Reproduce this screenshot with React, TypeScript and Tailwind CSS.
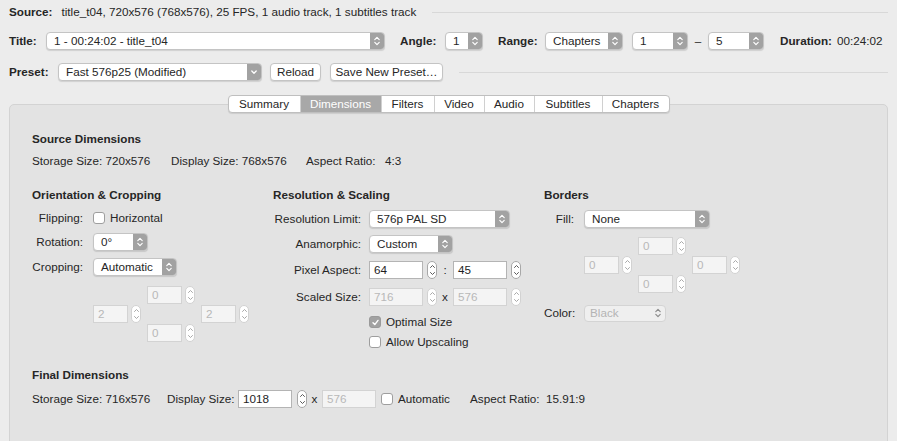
import React from "react";

const UpDown = ({ color = "#ffffff" }: { color?: string }) => (
  <svg width="8" height="12" viewBox="0 0 8 12" fill="none">
    <path d="M1.8 4.6 L4 2.4 L6.2 4.6 M1.8 7.4 L4 9.6 L6.2 7.4" stroke={color} strokeWidth="1.2" strokeLinecap="round" strokeLinejoin="round" />
  </svg>
);

const Down = () => (
  <svg width="8" height="12" viewBox="0 0 8 12" fill="none">
    <path d="M1.8 5 L4 7.2 L6.2 5" stroke="#ffffff" strokeWidth="1.3" strokeLinecap="round" strokeLinejoin="round" />
  </svg>
);

const Popup = ({ width, label, down }: { width: string; label: string; down?: boolean }) => (
  <div className={`${width} flex h-[18px] shrink-0 items-stretch rounded-[4px] border border-[#c4c4c4] bg-white shadow-[0_1px_1px_rgba(0,0,0,0.12)]`}>
    <span className="flex flex-1 items-center overflow-hidden whitespace-nowrap pl-[7px] text-[#262626]">{label}</span>
    <span className="flex w-[14px] items-center justify-center rounded-r-[3px] bg-[#a2a2a2]">
      {down ? <Down /> : <UpDown />}
    </span>
  </div>
);

const DisabledPopup = ({ width, label }: { width: string; label: string }) => (
  <div className={`${width} flex h-[17px] shrink-0 items-center rounded-[4px] border border-[#d4d4d4] bg-[#efefef]`}>
    <span className="flex-1 pl-[5px] text-[#b4b4b4]">{label}</span>
    <span className="flex w-[14px] items-center justify-center">
      <UpDown color="#8c8c8c" />
    </span>
  </div>
);

const Stepper = ({ dark }: { dark?: boolean }) => (
  <span className={`flex h-[18px] w-[10px] items-center justify-center rounded-full border bg-white ${dark ? "border-[#a8a8a8]" : "border-[#d2d2d2]"}`}>
    <svg width="7" height="16" viewBox="0 0 7 16" fill="none">
      <path d="M1.5 5.5 L3.5 3.5 L5.5 5.5 M1.5 10.5 L3.5 12.5 L5.5 10.5" stroke={dark ? "#5a5a5a" : "#a8a8a8"} strokeWidth="1" strokeLinecap="round" strokeLinejoin="round" />
    </svg>
  </span>
);

const Field = ({ width, value, disabled }: { width: string; value: string; disabled?: boolean }) => (
  <span className={`${width} flex h-[18px] shrink-0 items-center border pl-[4px] ${disabled ? "border-[#d3d3d3] bg-[#f4f4f4] text-[#b8b8b8]" : "border-[#b4b4b4] bg-white text-[#1e1e1e]"}`}>
    {value}
  </span>
);

const Checkbox = ({ checked }: { checked?: boolean }) => (
  <span className={`flex h-[12px] w-[12px] shrink-0 items-center justify-center rounded-[3px] border ${checked ? "border-[#9a9a9a] bg-[#a2a2a2]" : "border-[#9e9e9e] bg-white"}`}>
    {checked && (
      <svg width="9" height="9" viewBox="0 0 9 9" fill="none">
        <path d="M2 4.8 L3.8 6.6 L7 2.4" stroke="#ffffff" strokeWidth="1.4" strokeLinecap="round" strokeLinejoin="round" />
      </svg>
    )}
  </span>
);

// small number box with stepper, used in the crop and border grids
const SmallNum = ({ value }: { value: string }) => (
  <div className="flex items-center gap-[3px]">
    <Field width="w-[35px]" value={value} disabled />
    <Stepper />
  </div>
);

const CrossGrid = ({ top, left, right, bottom }: { top: string; left: string; right: string; bottom: string }) => (
  <div className="grid grid-cols-[54px_54px_54px] grid-rows-[18px_18px_18px] gap-y-[1px]">
    <div />
    <SmallNum value={top} />
    <div />
    <SmallNum value={left} />
    <div />
    <SmallNum value={right} />
    <div />
    <SmallNum value={bottom} />
    <div />
  </div>
);

const tabs = ["Summary", "Dimensions", "Filters", "Video", "Audio", "Subtitles", "Chapters"];
const tabWidths: Record<string, string> = {
  Summary: "w-[71px]",
  Dimensions: "w-[81px]",
  Filters: "w-[53px]",
  Video: "w-[50px]",
  Audio: "w-[50px]",
  Subtitles: "w-[68px]",
  Chapters: "w-[67px]",
};

const App = () => {
  return (
    <div className="flex h-[441px] w-[897px] flex-col overflow-hidden whitespace-nowrap bg-[#ececec] font-['Liberation_Sans',Arial,sans-serif] text-[11.7px] text-[#262626]">
      {/* Source */}
      <div className="flex h-[24px] items-center pl-[9px] pr-[9px]">
        <span className="font-bold">Source:</span>
        <span className="ml-[9px]">title_t04, 720x576 (768x576), 25 FPS, 1 audio track, 1 subtitles track</span>
        <span className="ml-[16px] h-px flex-1 bg-[#d8d8d8]" />
      </div>

      {/* Title */}
      <div className="mt-[8px] flex h-[18px] items-center pl-[9px]">
        <span className="w-[37px] font-bold">Title:</span>
        <Popup width="w-[339px]" label="1 - 00:24:02 - title_t04" />
        <span className="ml-[15px] w-[45px] font-bold">Angle:</span>
        <Popup width="w-[38px]" label="1" />
        <span className="ml-[15px] w-[47px] font-bold">Range:</span>
        <Popup width="w-[78px]" label="Chapters" />
        <span className="ml-[9px]"><Popup width="w-[56px]" label="1" /></span>
        <span className="w-[20px] text-center">–</span>
        <Popup width="w-[56px]" label="5" />
        <span className="ml-[16px] font-bold">Duration:</span>
        <span className="ml-[5px]">00:24:02</span>
      </div>

      {/* Preset */}
      <div className="mt-[13px] flex h-[18px] items-center pl-[9px] pr-[9px]">
        <span className="w-[49px] font-bold">Preset:</span>
        <Popup width="w-[204px]" label="Fast 576p25 (Modified)" down />
        <button className="ml-[8px] flex h-[18px] w-[51px] items-center justify-center rounded-[4px] border border-[#c4c4c4] bg-white shadow-[0_1px_1px_rgba(0,0,0,0.12)]">
          Reload
        </button>
        <button className="ml-[9px] flex h-[18px] w-[113px] items-center justify-center rounded-[4px] border border-[#c4c4c4] bg-white shadow-[0_1px_1px_rgba(0,0,0,0.12)]">
          Save New Preset…
        </button>
        <span className="ml-[16px] h-px flex-1 bg-[#d8d8d8]" />
      </div>

      {/* Tabs */}
      <div className="relative z-10 mt-[14px] -mb-[9px] flex justify-center pl-[9px] pr-[9px]">
        <div className="flex h-[18px] overflow-hidden rounded-[4px] border border-[#bfbfbf] bg-white shadow-[0_1px_1px_rgba(0,0,0,0.1)]">
          {tabs.map((t, i) => (
            <span
              key={t}
              className={`${tabWidths[t]} flex items-center justify-center ${i > 0 ? "border-l border-[#d0d0d0]" : ""} ${t === "Dimensions" ? "bg-[#a8a8a8] text-white" : "text-[#262626]"}`}
            >
              {t}
            </span>
          ))}
        </div>
      </div>

      {/* Panel */}
      <div className="mx-[9px] -mb-[6px] flex-1 rounded-t-[5px] border border-[#d3d3d3] bg-[#e3e3e3] pl-[22px] pt-[26px]">
        <div className="flex h-[16px] items-center font-bold">Source Dimensions</div>
        <div className="mt-[6px] flex h-[16px] items-center">
          <span className="w-[139px]">Storage Size: 720x576</span>
          <span className="w-[135px]">Display Size: 768x576</span>
          <span className="w-[79px]">Aspect Ratio:</span>
          <span>4:3</span>
        </div>

        <div className="mt-[18px] flex h-[170px]">
          {/* Orientation & Cropping */}
          <div className="w-[241px]">
            <div className="flex h-[16px] items-center font-bold">Orientation &amp; Cropping</div>
            <div className="mt-[6px] flex h-[18px] items-center">
              <span className="w-[61px] pr-[10px] text-right">Flipping:</span>
              <Checkbox />
              <span className="ml-[5px]">Horizontal</span>
            </div>
            <div className="mt-[6px] flex h-[18px] items-center">
              <span className="w-[61px] pr-[10px] text-right">Rotation:</span>
              <Popup width="w-[55px]" label="0°" />
            </div>
            <div className="mt-[7px] flex h-[18px] items-center">
              <span className="w-[61px] pr-[10px] text-right">Cropping:</span>
              <Popup width="w-[84px]" label="Automatic" />
            </div>
            <div className="mt-[10px] pl-[61px]">
              <CrossGrid top="0" left="2" right="2" bottom="0" />
            </div>
          </div>

          {/* Resolution & Scaling */}
          <div className="w-[271px]">
            <div className="flex h-[16px] items-center font-bold">Resolution &amp; Scaling</div>
            <div className="mt-[7px] flex h-[18px] items-center">
              <span className="w-[96px] pr-[8px] text-right">Resolution Limit:</span>
              <Popup width="w-[141px]" label="576p PAL SD" />
            </div>
            <div className="mt-[7px] flex h-[18px] items-center">
              <span className="w-[96px] pr-[8px] text-right">Anamorphic:</span>
              <Popup width="w-[84px]" label="Custom" />
            </div>
            <div className="mt-[8px] flex h-[18px] items-center">
              <span className="w-[96px] pr-[8px] text-right">Pixel Aspect:</span>
              <Field width="w-[54px]" value="64" />
              <span className="ml-[4px]"><Stepper dark /></span>
              <span className="w-[16px] text-center">:</span>
              <Field width="w-[54px]" value="45" />
              <span className="ml-[4px]"><Stepper dark /></span>
            </div>
            <div className="mt-[9px] flex h-[18px] items-center">
              <span className="w-[96px] pr-[8px] text-right">Scaled Size:</span>
              <Field width="w-[54px]" value="716" disabled />
              <span className="ml-[4px]"><Stepper /></span>
              <span className="w-[16px] text-center">x</span>
              <Field width="w-[54px]" value="576" disabled />
              <span className="ml-[4px]"><Stepper /></span>
            </div>
            <div className="mt-[8px] flex h-[16px] items-center pl-[96px]">
              <Checkbox checked />
              <span className="ml-[5px]">Optimal Size</span>
            </div>
            <div className="mt-[4px] flex h-[16px] items-center pl-[96px]">
              <Checkbox />
              <span className="ml-[5px]">Allow Upscaling</span>
            </div>
          </div>

          {/* Borders */}
          <div className="w-[250px]">
            <div className="flex h-[16px] items-center font-bold">Borders</div>
            <div className="mt-[7px] flex h-[18px] items-center">
              <span className="w-[40px] pr-[10px] text-right">Fill:</span>
              <Popup width="w-[126px]" label="None" />
            </div>
            <div className="mt-[9px] pl-[40px]">
              <CrossGrid top="0" left="0" right="0" bottom="0" />
            </div>
            <div className="mt-[11px] flex h-[18px] items-center">
              <span className="w-[40px]">Color:</span>
              <DisabledPopup width="w-[82px]" label="Black" />
            </div>
          </div>
        </div>

        <div className="mt-[10px] flex h-[16px] items-center font-bold">Final Dimensions</div>
        <div className="mt-[7px] flex h-[18px] items-center">
          <span className="w-[135px]">Storage Size: 716x576</span>
          <span className="w-[71px]">Display Size:</span>
          <Field width="w-[54px]" value="1018" />
          <span className="ml-[5px]"><Stepper dark /></span>
          <span className="w-[15px] text-center">x</span>
          <Field width="w-[54px]" value="576" disabled />
          <span className="ml-[5px]"><Checkbox /></span>
          <span className="ml-[5px] w-[72px]">Automatic</span>
          <span className="w-[76px]">Aspect Ratio:</span>
          <span>15.91:9</span>
        </div>
      </div>
    </div>
  );
};

export default App;
